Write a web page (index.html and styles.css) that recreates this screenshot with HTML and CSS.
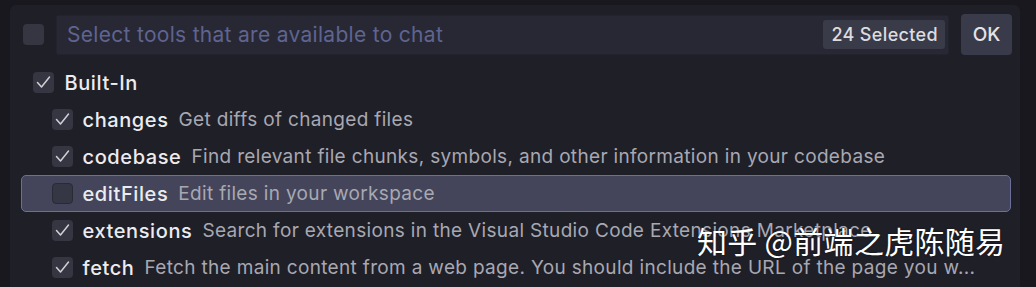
FILE: index.html
```html
<!DOCTYPE html>
<html>
<head>
<meta charset="utf-8">
<link rel="stylesheet" href="styles.css">
</head>
<body>
<div class="panel">
  <div class="header">
    <span class="cb"></span>
    <div class="input">
      <span class="placeholder">Select tools that are available to chat</span>
      <span class="badge">24 Selected</span>
    </div>
    <button class="ok">OK</button>
  </div>
  <div class="list">
    <div class="row group">
      <span class="cb checked"><svg viewBox="0 0 21 21"><polyline points="4.5,10.5 8.5,15 16.5,5"/></svg></span>
      <span class="label">Built-In</span>
    </div>
    <div class="row item">
      <span class="cb checked"><svg viewBox="0 0 21 21"><polyline points="4.5,10.5 8.5,15 16.5,5"/></svg></span>
      <span class="label">changes</span>
      <span class="desc">Get diffs of changed files</span>
    </div>
    <div class="row item">
      <span class="cb checked"><svg viewBox="0 0 21 21"><polyline points="4.5,10.5 8.5,15 16.5,5"/></svg></span>
      <span class="label">codebase</span>
      <span class="desc">Find relevant file chunks, symbols, and other information in your codebase</span>
    </div>
    <div class="row item active">
      <span class="cb empty"></span>
      <span class="label">editFiles</span>
      <span class="desc">Edit files in your workspace</span>
    </div>
    <div class="row item">
      <span class="cb checked"><svg viewBox="0 0 21 21"><polyline points="4.5,10.5 8.5,15 16.5,5"/></svg></span>
      <span class="label">extensions</span>
      <span class="desc">Search for extensions in the Visual Studio Code Extensions Marketplace</span>
    </div>
    <div class="row item">
      <span class="cb checked"><svg viewBox="0 0 21 21"><polyline points="4.5,10.5 8.5,15 16.5,5"/></svg></span>
      <span class="label">fetch</span>
      <span class="desc">Fetch the main content from a web page. You should include the URL of the page you w...</span>
    </div>
  </div>
  <div class="watermark">知乎 @前端之虎陈随易</div>
</div>
</body>
</html>
```

FILE: styles.css
```css
html, body {
  margin: 0;
  padding: 0;
  height: 100%;
  overflow: hidden;
}
body {
  background: #18181e;
  font-family: Inter, "Noto Sans", "Liberation Sans", sans-serif;
}
.panel {
  position: relative;
  margin: 5px 16px 0 10px;
  height: 290px;
  background: #1f1f27;
  border-radius: 6px 6px 0 0;
  box-sizing: border-box;
  padding-top: 9px;
}
.header {
  display: flex;
  align-items: center;
  gap: 12px;
  padding: 0 8px 0 13px;
}
.cb {
  flex: none;
  width: 21px;
  height: 21px;
  border-radius: 4px;
  background: #363642;
  box-sizing: border-box;
  display: flex;
  align-items: center;
  justify-content: center;
}
.cb svg {
  width: 21px;
  height: 21px;
  fill: none;
  stroke: #d0d0d6;
  stroke-width: 1.5;
  stroke-linecap: round;
  stroke-linejoin: round;
}
.cb.empty {
  background: #363744;
  border: 1.5px solid #2a2a35;
}
.input {
  flex: 1;
  height: 40px;
  box-sizing: border-box;
  background: #272833;
  border: 1px solid #22232c;
  border-radius: 2px;
  display: flex;
  align-items: center;
  justify-content: space-between;
  padding: 0 3px 0 10px;
}
.placeholder {
  color: #5f6491;
  font-size: 21px;
  letter-spacing: 0.3px;
}
.badge {
  background: #3a3b48;
  color: #dcdce0;
  font-size: 18px;
  font-weight: 500;
  letter-spacing: 0.35px;
  height: 29px;
  line-height: 29px;
  padding: 0 7px 0 8px;
  border-radius: 3px;
}
.ok {
  flex: none;
  width: 51px;
  height: 41px;
  border: none;
  border-radius: 4px;
  background: #3a3b4a;
  color: #e4e4e8;
  font-family: inherit;
  font-size: 19px;
  font-weight: 500;
  padding: 0;
}
.list {
  margin: 9px 9px 0 11px;
}
.row {
  height: 37px;
  box-sizing: border-box;
  display: flex;
  align-items: center;
  white-space: nowrap;
  overflow: hidden;
  border: 1.5px solid transparent;
  border-radius: 5px;
}
.row.group {
  padding-left: 10.5px;
  gap: 11px;
}
.row.item {
  padding-left: 29.5px;
  gap: 10px;
}
.row.active {
  background: #44455a;
  border-color: #6b6f99;
}
.label {
  color: #ececf0;
  font-size: 20px;
  font-weight: 500;
  letter-spacing: 0.6px;
}
.desc {
  color: #a8a8b2;
  font-size: 19px;
  letter-spacing: 0.33px;
}
.watermark {
  position: absolute;
  left: 687px;
  top: 213px;
  color: #ffffff;
  font-family: "Noto Sans CJK SC", sans-serif;
  font-size: 30px;
  letter-spacing: 0.3px;
  text-shadow: 0 0 2px rgba(0,0,0,0.6);
  white-space: nowrap;
}
```
